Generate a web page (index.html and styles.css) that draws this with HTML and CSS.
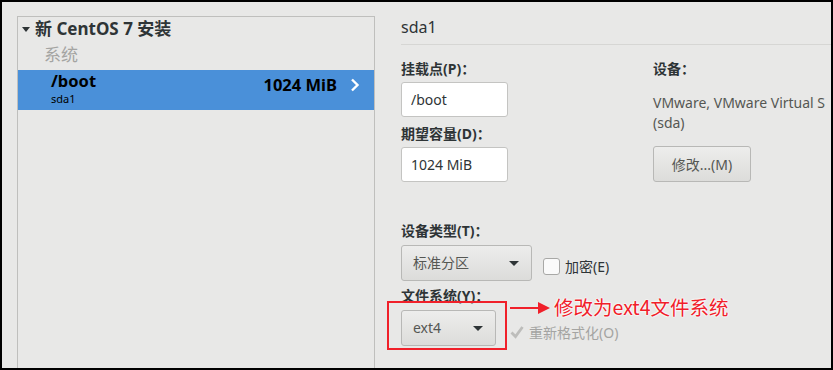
FILE: index.html
```html
<!DOCTYPE html>
<html lang="zh-CN">
<head>
    <meta charset="UTF-8">
    <title>手动分区</title>
    <link rel="stylesheet" href="styles.css">
</head>
<body>
    <div class="frame">
        <div class="left-col">
            <div class="tree">
                <div class="tree-title"><span class="expander"></span>新 CentOS 7 安装</div>
                <div class="tree-group">系统</div>
                <div class="part-row selected">
                    <div class="part-info">
                        <div class="part-name">/boot</div>
                        <div class="part-dev">sda1</div>
                    </div>
                    <div class="part-size">1024 MiB</div>
                    <svg class="chevron" width="10" height="14" viewBox="0 0 10 14">
                        <path d="M2 1.5 L7.5 7 L2 12.5" fill="none" stroke="#fff" stroke-width="2.4"/>
                    </svg>
                </div>
            </div>
        </div>

        <div class="right-col">
            <div class="dev-title">sda1</div>
            <div class="details">
                <div class="col-a">
                    <label class="field-label">挂载点(<u>P</u>)：</label>
                    <input class="entry" type="text" value="/boot">
                    <label class="field-label second">期望容量(<u>D</u>)：</label>
                    <input class="entry" type="text" value="1024 MiB">
                </div>
                <div class="col-b">
                    <div class="field-label">设备：</div>
                    <div class="dev-desc">VMware, VMware Virtual S<br>(sda)</div>
                    <button class="btn">修改...(<u>M</u>)</button>
                </div>
            </div>

            <label class="field-label type-label">设备类型(<u>T</u>)：</label>
            <div class="combo-row">
                <div class="combo wide">标准分区<span class="arrow"></span></div>
                <label class="check"><span class="box"></span>加密(E)</label>
            </div>

            <label class="field-label fs-label">文件系统(<u>Y</u>)：</label>
            <div class="combo-row">
                <div class="combo narrow">ext4<span class="arrow"></span></div>
                <label class="check disabled">
                    <svg class="tick" width="16" height="16" viewBox="0 0 16 16">
                        <path d="M2.5 8.5 L6.5 12.5 L13.5 3" fill="none" stroke="#bdbdbb" stroke-width="2.8"/>
                    </svg>重新格式化(O)</label>
            </div>

            <!-- 标注 -->
            <div class="note-box"></div>
            <div class="note-arrow"></div>
            <div class="note-text">修改为ext4文件系统</div>
        </div>
    </div>
</body>
</html>
```

FILE: styles.css
```css
body {
    margin: 0;
    background-color: #000000;
    font-family: "Noto Sans", "Noto Sans CJK SC", sans-serif;
    color: #2e3436;
}
.frame {
    box-sizing: border-box;
    width: 833px;
    height: 370px;
    border: 2px solid #000;
    background-color: #e8e8e7;
    display: flex;
    overflow: hidden;
}
.left-col {
    padding: 14px 0 0 15px;
}
.tree {
    box-sizing: border-box;
    width: 358px;
    height: 360px;
    border: 1px solid #bfbfbd;
    border-bottom: none;
}
.tree-title {
    font-size: 17px;
    font-weight: bold;
    height: 26px;
    line-height: 26px;
    padding-left: 4px;
    margin-top: -1px;
}
.expander {
    display: inline-block;
    width: 0;
    height: 0;
    border-left: 4.5px solid transparent;
    border-right: 4.5px solid transparent;
    border-top: 5px solid #2e3436;
    margin-right: 5px;
    vertical-align: 3px;
}
.tree-group {
    font-size: 17px;
    color: #a4a4a2;
    padding-left: 26px;
    height: 26px;
    line-height: 22px;
    margin-top: 2px;
}
.part-row {
    display: flex;
    align-items: center;
    height: 40px;
    padding: 0 14px 0 33px;
}
.selected {
    background-color: #4a90d9;
}
.part-info {
    flex: 1;
}
.part-name {
    font-size: 16.5px;
    font-weight: bold;
    line-height: 18px;
    color: #000;
}
.part-dev {
    font-size: 11px;
    line-height: 18px;
    color: #000;
}
.part-size {
    font-size: 16.5px;
    font-weight: bold;
    color: #000;
    margin-bottom: 12px;
    margin-right: 13px;
}
.chevron {
    margin-bottom: 11px;
}
.right-col {
    position: relative;
    flex: 1;
    padding-left: 26px;
}
.dev-title {
    font-size: 16px;
    height: 42px;
    line-height: 50px;
    border-bottom: 1px solid #d6d6d4;
}
.details {
    display: flex;
    margin-top: 15px;
}
.col-a {
    width: 252px;
}
.field-label {
    display: block;
    font-size: 14px;
    font-weight: bold;
    line-height: 18px;
}
.field-label u {
    text-decoration: none;
}
.entry {
    display: block;
    box-sizing: border-box;
    width: 107px;
    height: 35px;
    margin-top: 4px;
    padding: 0 9px;
    border: 1px solid #c4c4c2;
    border-radius: 3px;
    background: #fff;
    font-family: inherit;
    font-size: 14px;
    color: #2e3436;
}
.second {
    margin-top: 8px;
}
.dev-desc {
    font-size: 14px;
    color: #555753;
    line-height: 20px;
    margin-top: 15px;
}
.btn {
    display: block;
    margin-top: 13px;
    width: 98px;
    height: 36px;
    border: 1px solid #b8b8b6;
    border-radius: 3px;
    background: linear-gradient(#ededec, #dcdcda);
    font-family: inherit;
    font-size: 14px;
    color: #555753;
}
.btn u {
    text-decoration: none;
}
.type-label {
    margin-top: 40px;
}
.combo-row {
    display: flex;
    align-items: center;
    margin-top: 5px;
}
.combo {
    box-sizing: border-box;
    position: relative;
    height: 36px;
    line-height: 34px;
    padding-left: 11px;
    border: 1px solid #b8b8b6;
    border-radius: 3px;
    background: linear-gradient(#ededec, #dcdcda);
    font-size: 14px;
    color: #555753;
}
.wide {
    width: 131px;
}
.narrow {
    width: 95px;
}
.arrow {
    position: absolute;
    right: 12px;
    top: 15px;
    width: 0;
    height: 0;
    border-left: 5px solid transparent;
    border-right: 5px solid transparent;
    border-top: 5px solid #2e3436;
}
.check {
    display: flex;
    align-items: center;
    margin-left: 11px;
    margin-top: 6px;
    font-size: 14px;
    color: #2e3436;
}
.box {
    box-sizing: border-box;
    width: 17px;
    height: 17px;
    border: 1px solid #a8a8a6;
    border-radius: 3px;
    background: #fafafa;
    margin-right: 5px;
}
.fs-label {
    margin-top: 6px;
}
.disabled {
    color: #a4a4a2;
    margin-left: 13px;
    margin-top: 8px;
}
.tick {
    margin-right: 4px;
}
.note-box {
    position: absolute;
    left: 12px;
    top: 299px;
    width: 116px;
    height: 45px;
    border: 2px solid #f0202a;
}
.note-arrow {
    position: absolute;
    left: 135px;
    top: 305px;
    width: 30px;
    height: 2px;
    background: #f0202a;
}
.note-arrow::after {
    content: "";
    position: absolute;
    right: -10px;
    top: -5px;
    border-top: 6px solid transparent;
    border-bottom: 6px solid transparent;
    border-left: 12px solid #f0202a;
}
.note-text {
    position: absolute;
    left: 179px;
    top: 292px;
    font-family: "Noto Sans CJK SC", sans-serif;
    font-size: 19.5px;
    line-height: 26px;
    color: #f0202a;
    text-shadow: 0 0 2px #fff, 0 0 2px #fff, 0 0 2px #fff;
}
```
